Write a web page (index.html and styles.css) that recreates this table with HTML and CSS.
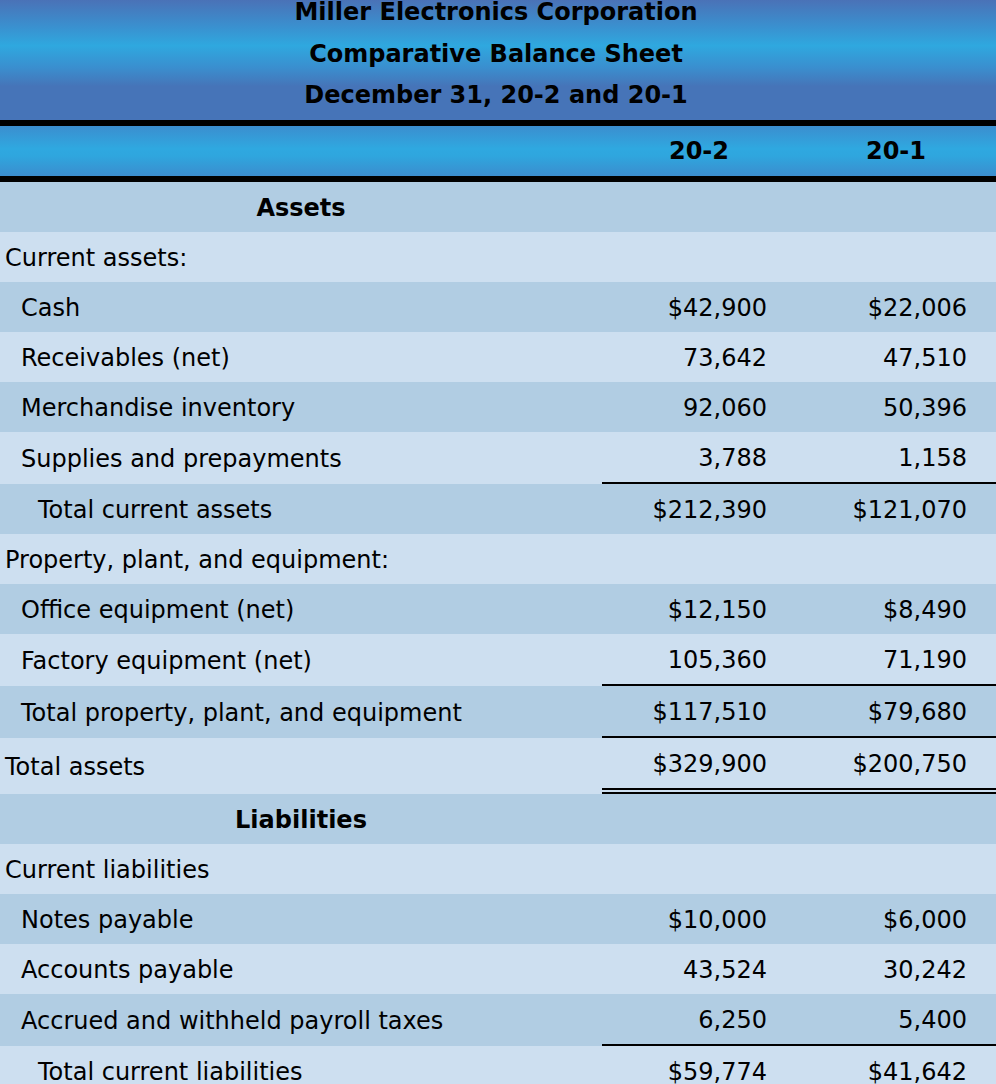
FILE: index.html
```html
<!DOCTYPE html>
<html lang="en">
<head>
<meta charset="utf-8">
<title>Comparative Balance Sheet</title>
<link rel="stylesheet" href="styles.css">
</head>
<body>
<div class="sheet">
  <div class="title">
    <div class="title-line first">Miller Electronics Corporation</div>
    <div class="title-line">Comparative Balance Sheet</div>
    <div class="title-line">December 31, 20-2 and 20-1</div>
  </div>
  <table class="bs">
    <colgroup>
      <col class="c-label">
      <col class="c-y2">
      <col class="c-y1">
    </colgroup>
    <thead>
      <tr class="head">
        <th></th>
        <th>20-2</th>
        <th>20-1</th>
      </tr>
    </thead>
    <tbody>
      <tr class="dark"><td class="section">Assets</td><td></td><td></td></tr>
      <tr class="light"><td class="l0">Current assets:</td><td></td><td></td></tr>
      <tr class="dark"><td class="l1">Cash</td><td class="num">$42,900</td><td class="num">$22,006</td></tr>
      <tr class="light"><td class="l1">Receivables (net)</td><td class="num">73,642</td><td class="num">47,510</td></tr>
      <tr class="dark"><td class="l1">Merchandise inventory</td><td class="num">92,060</td><td class="num">50,396</td></tr>
      <tr class="light"><td class="l1">Supplies and prepayments</td><td class="num rule">3,788</td><td class="num rule">1,158</td></tr>
      <tr class="dark"><td class="l2">Total current assets</td><td class="num">$212,390</td><td class="num">$121,070</td></tr>
      <tr class="light"><td class="l0">Property, plant, and equipment:</td><td></td><td></td></tr>
      <tr class="dark"><td class="l1">Office equipment (net)</td><td class="num">$12,150</td><td class="num">$8,490</td></tr>
      <tr class="light"><td class="l1">Factory equipment (net)</td><td class="num rule">105,360</td><td class="num rule">71,190</td></tr>
      <tr class="dark"><td class="l1">Total property, plant, and equipment</td><td class="num rule">$117,510</td><td class="num rule">$79,680</td></tr>
      <tr class="light"><td class="l0">Total assets</td><td class="num double">$329,900</td><td class="num double">$200,750</td></tr>
      <tr class="dark"><td class="section">Liabilities</td><td></td><td></td></tr>
      <tr class="light"><td class="l0">Current liabilities</td><td></td><td></td></tr>
      <tr class="dark"><td class="l1">Notes payable</td><td class="num">$10,000</td><td class="num">$6,000</td></tr>
      <tr class="light"><td class="l1">Accounts payable</td><td class="num">43,524</td><td class="num">30,242</td></tr>
      <tr class="dark"><td class="l1">Accrued and withheld payroll taxes</td><td class="num rule">6,250</td><td class="num rule">5,400</td></tr>
      <tr class="light"><td class="l2">Total current liabilities</td><td class="num">$59,774</td><td class="num">$41,642</td></tr>
    </tbody>
  </table>
</div>
</body>
</html>
```

FILE: styles.css
```css
html, body {
  margin: 0;
  padding: 0;
  background: #cddff0;
}

body {
  font-family: "DejaVu Sans", Verdana, sans-serif;
  font-size: 24px;
  color: #000;
}

.sheet {
  width: 996px;
  overflow: hidden;
}

.title {
  box-sizing: border-box;
  height: 126px;
  border-bottom: 6px solid #000;
  background: linear-gradient(to bottom, #4a72b7 0%, #3a90cf 22%, #2fa8df 38%, #3a8fcf 56%, #4674b8 72%, #4674b8 100%);
  text-align: center;
  font-weight: bold;
  overflow: hidden;
}

.title-line {
  line-height: 41.5px;
  padding-right: 4px;
}

.title-line.first {
  margin-top: -8px;
}

.bs {
  width: 996px;
  border-collapse: separate;
  border-spacing: 0;
  table-layout: fixed;
}

.c-label { width: 602px; }
.c-y2 { width: 194px; }
.c-y1 { width: 200px; }

.head th {
  height: 50px;
  padding: 0;
  font-weight: bold;
  text-align: center;
  vertical-align: middle;
  background: linear-gradient(to bottom, #3b8ecf 0%, #2fa8e0 45%, #2fa6de 60%, #3b8dce 100%);
  border-bottom: 6px solid #000;
}

.bs td {
  height: 49px;
  padding: 1px 0 0 0;
  vertical-align: middle;
  white-space: nowrap;
}

.dark td { background: #b1cde3; }
.light td { background: #cddff0; }

.section {
  text-align: center;
  font-weight: bold;
}

.l0 { padding-left: 5px !important; }
.l1 { padding-left: 21px !important; }
.l2 { padding-left: 38px !important; }

.num {
  text-align: right;
  padding-right: 29px !important;
}

.rule {
  border-bottom: 2px solid #000;
}

.double {
  border-bottom: 6px double #000;
}
```
